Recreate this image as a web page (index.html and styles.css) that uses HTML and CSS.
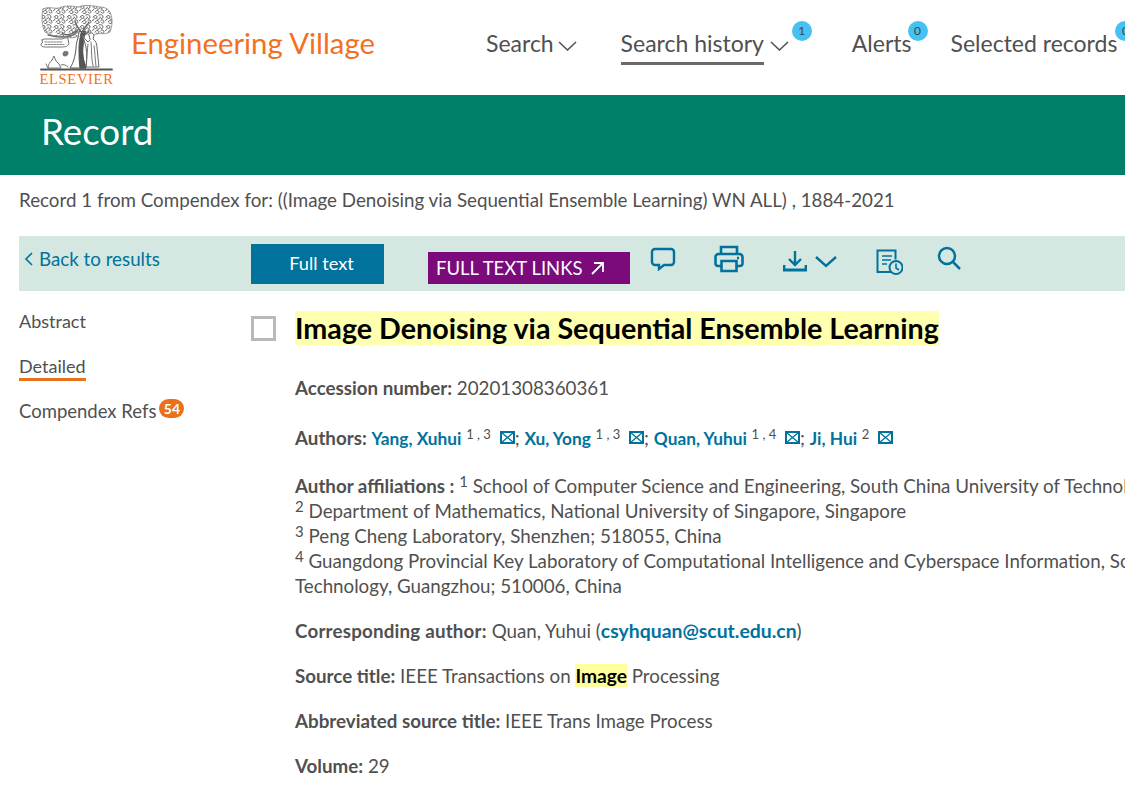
FILE: index.html
```html
<!DOCTYPE html>
<html lang="en">
<head>
<meta charset="utf-8">
<title>Engineering Village - Record</title>
<link rel="stylesheet" href="styles.css">
</head>
<body>
<header class="topbar">
  <div class="logo">
    <svg class="tree" width="73" height="68" viewBox="0 0 73 68" fill="none" stroke="#666" stroke-width="1" stroke-linecap="round">
      <defs>
        <pattern id="leaf" width="13" height="10" patternUnits="userSpaceOnUse">
          <path d="M1 3c1-2 4-2 4 0s-3 2-3 0M7 1c2-1 4 0 4 2s-3 2-3 0M3 8c1-2 4-2 4 0s-2 2-3 1M9 6c2-1 3 1 3 2s-2 2-3 0M0 6c1 1 1 1 2-1M5 5c1 1 2 0 3-1" stroke="#5c5c5c" stroke-width="1" fill="none"/>
        </pattern>
      </defs>
      <path d="M3 5c6-3 10 0 16-1 7-3 13-2 19-1 8-3 16-1 22 0 6 0 10 3 11 8 2 6 1 11-1 17-6 3-9 1-14 2-4 2-9-1-13 0l-4 1c-5 5-14 2-20 1-5 1-10-2-14-4-3-6-4-14-2-23z" fill="url(#leaf)" stroke="#777" stroke-width=".7"/>
      <path d="M8 31c6 1 12 4 22 1 4-1 7-4 9-8M22 29c3 3 9 2 14-2M49 27c-3 3-5 4-7 7M35 17c1 4 3 7 6 11M49 18c-2 4-5 6-7 10" stroke-width="1.300"/>
      <path d="M2 36l2-1h18c3-1 5-2 6 0l1 5c-2 3-5 3-8 3H5c-3 0-4-1-4-3 2-1 2-3 1-4z" fill="#fff" stroke-width=".9"/>
      <path d="M5 38h18M5 40.500h19" stroke-width=".8" stroke-dasharray="2 1"/>
      <path d="M39 28c-1 8-3 10-3 17-1 7-2 13-6 19h16c-3-8-4-15-3-23 0-4 1-9 2-13z" fill="#fff" stroke="#555"/>
      <path d="M41 29c-1 6-2 9-2 15 0 8 0 13 1 20h6c-3-8-4-15-3-23 0-4 1-9 2-13z" fill="#555" stroke="#555"/>
      <path d="M49 30c2-2 5-1 5 2l-1 3c3 2 4 5 4 9 1 7 1 12 2 19H46c1-6 1-13 0-20l-2-7-2-5 3 4 3 3 2-2z" fill="#fff" stroke-width="1"/>
      <path d="M51 38c1 8 0 16 2 24M54 42c1 6 1 13 2 20M48 40l-2 22" stroke-width=".9"/>
      <path d="M24 48c2-1 4-1 4 1s-1 3-3 3-3-2-1-4z" fill="#777" stroke-width=".8"/>
      <path d="M12 56l2-4 2 5 3 3 2 4H8c0-3 2-6 4-8zM8 64l-2-4M21 61c3-1 5 0 7 2" stroke-width=".9"/>
      <path d="M1 65.500h71" stroke-width="1.800" stroke="#555"/>
    </svg>
    <span class="logo-word">ELSEVIER</span>
  </div>
  <div class="brand">Engineering Village</div>
  <nav class="nav">
    <a class="nav-item nav-search">Search
      <svg class="chev" width="19" height="10" viewBox="0 0 19 10" fill="none" stroke="#555" stroke-width="1.6"><path d="M1 1l8.500 8L18 1"/></svg>
    </a>
    <a class="nav-item nav-hist"><span class="nav-active">Search history</span>
      <svg class="chev chev-hist" width="19" height="10" viewBox="0 0 19 10" fill="none" stroke="#555" stroke-width="1.6"><path d="M1 1l8.500 8L18 1"/></svg>
      <span class="badge badge-hist">1</span>
    </a>
    <a class="nav-item nav-alerts">Alerts<span class="badge badge-alerts">0</span></a>
    <a class="nav-item nav-sel">Selected records<span class="badge">0</span></a>
  </nav>
</header>

<section class="banner"><h1>Record</h1></section>

<p class="crumb">Record 1 from Compendex for: ((Image Denoising via Sequential Ensemble Learning) WN ALL) , 1884-2021</p>

<div class="toolbar">
  <a class="back">
    <svg width="9" height="14" viewBox="0 0 9 14" fill="none" stroke="#00729b" stroke-width="1.6"><path d="M8 1L2 7l6 6"/></svg>
    Back to results</a>
  <a class="btn-full">Full text</a>
  <a class="btn-links">FULL TEXT LINKS
    <svg width="15" height="15" viewBox="0 0 15 15" fill="none" stroke="#fff" stroke-width="1.8"><path d="M2 13L13 2M4 2h9v9"/></svg>
  </a>
  <div class="tools">
    <svg class="t-comment" width="26" height="24" viewBox="0 0 26 24" fill="none" stroke="#00729b" stroke-width="2.4"><path d="M5 2h16a3 3 0 0 1 3 3v10a3 3 0 0 1-3 3h-7l-5 4v-4H5a3 3 0 0 1-3-3V5a3 3 0 0 1 3-3z"/></svg>
    <svg class="t-print" width="30" height="28" viewBox="0 0 30 28" fill="none" stroke="#00729b" stroke-width="2.6"><path d="M7 9V2h16v7M7 21H4a2.500 2.500 0 0 1-2.500-2.500V12A3 3 0 0 1 4.500 9h21a3 3 0 0 1 3 3v6.500A2.500 2.500 0 0 1 26 21h-3"/><path d="M7.500 16h15v10h-15z"/><path d="M23 13h2"/></svg>
    <span class="t-dl">
      <svg width="24" height="22" viewBox="0 0 24 22" fill="none" stroke="#00729b" stroke-width="2.400"><path d="M12 1v13M6 9l6 6 6-6"/><path d="M1 15v5h22v-5" stroke-width="2.800"/></svg>
      <svg width="22" height="13" viewBox="0 0 22 13" fill="none" stroke="#00729b" stroke-width="2.400"><path d="M1 2l10 9 10-9"/></svg>
    </span>
    <svg class="t-hist" width="27" height="26" viewBox="0 0 27 26" fill="none" stroke="#00729b" stroke-width="2"><path d="M15 23H1.500V1.500h18v9"/><path d="M6 7h10M6 11h9M6 15h5" stroke-width="1.600"/><circle cx="20" cy="18.500" r="6.500" fill="#d4e8e1"/><path d="M20 14.500v4.500l3 2" stroke-width="1.600"/></svg>
    <svg class="t-search" width="24" height="24" viewBox="0 0 24 24" fill="none" stroke="#00729b" stroke-width="2.500"><circle cx="10" cy="10" r="8"/><path d="M16 16l7 7"/></svg>
  </div>
</div>

<div class="main">
  <aside class="side">
    <a class="side-link">Abstract</a>
    <a class="side-link side-active">Detailed</a>
    <a class="side-link side-refs">Compendex Refs<span class="count">54</span></a>
  </aside>
  <span class="check"></span>
  <article class="record">
    <h2 class="title"><mark class="hl-title">Image Denoising via Sequential Ensemble Learning</mark></h2>
    <p class="row"><b>Accession number:</b> 20201308360361</p>
    <p class="row row-authors"><b>Authors:</b> <a class="auth auth-name">Yang, Xuhui</a> <sup>1 , 3</sup> <svg class="mail" width="15" height="13" viewBox="0 0 15 13"><use href="#m"/></svg>; <a class="auth auth-name">Xu, Yong</a> <sup>1 , 3</sup> <svg class="mail" width="15" height="13" viewBox="0 0 15 13"><use href="#m"/></svg>; <a class="auth auth-name">Quan, Yuhui</a> <sup>1 , 4</sup> <svg class="mail" width="15" height="13" viewBox="0 0 15 13"><use href="#m"/></svg>; <a class="auth auth-name">Ji, Hui</a> <sup>2</sup> <svg class="mail" width="15" height="13" viewBox="0 0 15 13"><use href="#m"/></svg></p>
    <div class="row aff">
      <b>Author affiliations :</b> <sup>1</sup> School of Computer Science and Engineering, South China University of Technology, Guangzhou; 510006, China<br>
      <sup>2</sup> Department of Mathematics, National University of Singapore, Singapore<br>
      <sup>3</sup> Peng Cheng Laboratory, Shenzhen; 518055, China<br>
      <sup>4</sup> Guangdong Provincial Key Laboratory of Computational Intelligence and Cyberspace Information, South China University of<br>
      Technology, Guangzhou; 510006, China
    </div>
    <p class="row"><b class="label-corr">Corresponding author:</b> Quan, Yuhui (<a class="auth auth-mail">csyhquan@scut.edu.cn</a>)</p>
    <p class="row"><b>Source title:</b> IEEE Transactions on <mark class="hl"><b>Image</b></mark> Processing</p>
    <p class="row"><b>Abbreviated source title:</b> IEEE Trans Image Process</p>
    <p class="row"><b>Volume:</b> 29</p>
  </article>
</div>
<svg class="defs" width="0" height="0"><defs><g id="m" fill="none" stroke="#00729b"><rect x="1" y="1" width="13" height="11" stroke-width="2"/><path d="M1.500 1.500l12 10M13.500 1.500l-12 10" stroke-width="1.300"/></g></defs></svg>
</body>
</html>
```
FILE: styles.css
```css
* { box-sizing: border-box; }
html, body { margin: 0; padding: 0; height: 800px; overflow: hidden; }
body { width: 1125px; background: #fff; color: #505050; font-family: Lato, "Liberation Sans", sans-serif; font-size: 18.75px; line-height: 25px; }
a { color: inherit; text-decoration: none; }

.topbar { display: flex; height: 95px; padding-left: 40px; white-space: nowrap; }
.logo { flex: none; width: 73px; padding-top: 4px; display: flex; flex-direction: column; align-items: center; }
.tree { display: block; flex: none; }
.logo-word { font-family: "Liberation Serif", serif; font-size: 14.5px; line-height: 14px; letter-spacing: 0.7px; color: #f37021; }
.brand { flex: none; width: 243px; margin-left: 18px; margin-top: 23px; font-size: 29.3px; line-height: 40px; color: #f37021; }
.nav { display: flex; margin-left: 112px; margin-top: 27px; font-size: 23px; line-height: 32px; color: #505050; }
.nav-item { position: relative; display: block; flex: none; height: 38px; }
.nav-search { margin-right: 44px; }
.chev { margin-left: -2px; vertical-align: 1px; }
.chev-hist { margin-left: 0; }
.nav-active { display: inline-block; height: 38px; border-bottom: 3px solid #6a6a6a; }
.nav-hist { margin-right: 63px; }
.nav-alerts { margin-right: 39px; }
.badge { position: absolute; right: -18px; top: -6px; width: 20px; height: 20px; border-radius: 50%; background: #45c1f3; color: #444; font-size: 12px; line-height: 20px; text-align: center; }
.badge-hist { right: -23px; }
.badge-alerts { right: -16px; }

.banner { height: 80px; background: #007f69; padding-left: 41px; }
.banner h1 { margin: 0; font-size: 36.7px; font-weight: 400; line-height: 72px; color: #fff; }

.crumb { margin: 12px 0 0 19px; line-height: 25px; white-space: nowrap; }

.toolbar { display: flex; align-items: flex-start; height: 55px; margin: 24px 0 0 19px; background: #d4e8e1; white-space: nowrap; }
.back { display: flex; flex: none; align-items: center; gap: 6px; margin: 10px 0 0 5px; color: #00729b; width: 227px; }
.btn-full { flex: none; width: 133px; height: 40px; margin-top: 8px; padding-left: 8px; background: #00729b; color: #fff; font-size: 18.2px; text-align: center; line-height: 39px; }
.btn-links { display: flex; flex: none; align-items: center; gap: 7px; width: 202px; height: 32px; margin: 16px 0 0 44px; padding-left: 8px; background: #7b0a7b; color: #fff; font-size: 18.5px; }
.tools { display: flex; align-items: flex-start; }
.t-comment { margin: 11px 0 0 20px; }
.t-print { margin: 9px 0 0 38px; }
.t-dl { display: flex; align-items: center; gap: 8px; margin: 14px 0 0 39px; }
.t-hist { margin: 13px 0 0 39px; }
.t-search { margin: 10px 0 0 34px; }

.main { display: flex; align-items: flex-start; padding: 18px 0 0 19px; white-space: nowrap; }
.side { display: flex; flex: none; flex-direction: column; align-items: flex-start; width: 232px; gap: 20px; font-size: 18px; }
.side-link { display: block; position: relative; }
.side-active { border-bottom: 3px solid #e9711c; height: 27px; margin-bottom: -2px; }
.side-refs { font-size: 18.5px; }
.count { position: absolute; right: -28px; top: 0; width: 25px; height: 19px; border-radius: 10px; background: #e9711c; color: #fff; font-size: 14px; font-weight: 700; line-height: 19px; text-align: center; }
.check { flex: none; width: 25px; height: 25px; margin-top: 7px; border: 3px solid #b9b9b9; background: #fff; }
.record { flex: none; margin-left: 19px; padding-top: 4px; }
.title { margin: 0 0 32px; font-size: 28.7px; font-weight: 700; line-height: 30px; color: #000; }
.hl-title { background: #ffffb0; color: #000; }
.hl { background: #ffff9e; color: #000; }
.row { margin: 0 0 20px; }
.row-authors { margin: 25px 0 22px; }
.row b { font-weight: 700; color: #505050; }
.row .label-corr { letter-spacing: 0.2px; }
.row .hl b { color: #000; font-size: 19.2px; }
.auth { color: #00729b; font-weight: 700; }
.auth-name { font-size: 17.3px; }
.auth-mail { font-size: 19.4px; }
sup { font-size: 13px; line-height: 0; vertical-align: 6px; }
.aff sup { font-size: 15px; }
.mail { vertical-align: 1px; margin-left: 4px; }
.defs { position: absolute; }
```
